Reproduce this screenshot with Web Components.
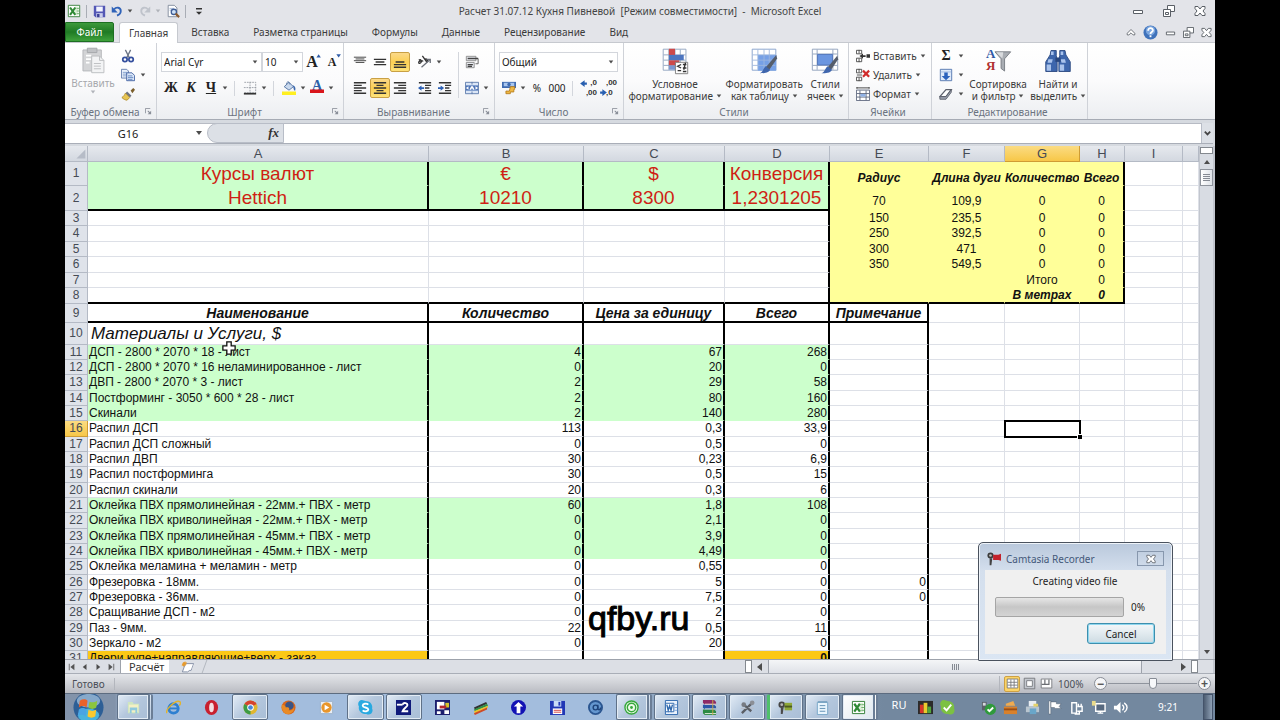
<!DOCTYPE html>
<html lang="ru">
<head>
<meta charset="utf-8">
<title>Расчет 31.07.12 Кухня Пивневой - Microsoft Excel</title>
<style>
  html, body {
    height: 100%;
    margin: 0;
    background: #000;
  }

  body {
    font: 10px/12px "Noto Sans", "Open Sans", sans-serif;
    color: #3b3b3b;
  }
</style>
</head>
<body>
<desk-top></desk-top>

<script>
const ICONS = {
  // title bar
  excel: [16, '<path fill="#fff" stroke="#2f7d33" d="M1.500 1.500h13v13h-13z"/><path fill="#dcefd8" d="M9 3h4v10H9z"/><path stroke="#2f8a35" stroke-width="2.400" fill="none" d="M3.500 4l6 8.500M9.500 4l-6 8.500"/><path stroke="#6cae6a" d="M11 5h3M11 8h3M11 11h3"/>'],
  save: [16, '<path fill="#5357b5" d="M1 1h14v14H3l-2-2z"/><path fill="#f2f4ff" d="M4 2h8v6H4z"/><path fill="#c9cdec" d="M4 10h8v5H4z"/><path fill="#3b3f94" d="M5 11h3v4H5z"/>'],
  undo: [16, '<path fill="none" stroke="#2f62b8" stroke-width="2.500" d="M4 6c3-4 9-3 9 2 0 3-2 5-5 6"/><path fill="#2f62b8" d="M1 2v8h8z"/>'],
  redo: [16, '<path fill="none" stroke="#bfc3cb" stroke-width="2.500" d="M12 6C9 2 3 3 3 8c0 3 2 5 5 6"/><path fill="#bfc3cb" d="M15 2v8H7z"/>'],
  preview: [16, '<path fill="#fff" stroke="#7d8798" d="M2.500 1.500h7l3 3v10h-10z"/><path stroke="#9fb4d4" d="M4 5h5M4 7h4"/><circle cx="9" cy="9" r="3" fill="#cfe2f8" stroke="#3f5e96" stroke-width="1.500"/><path stroke="#8a5b31" stroke-width="2.500" d="M11 11l4 4"/>'],
  custom: [16, '<path stroke="#333" stroke-width="2" d="M4 5h8"/><path fill="#333" d="M4 9h8l-4 4z"/>'],
  down: [8, '<path fill="#4c4c4c" d="M1 2h6L4 6z"/>'],
  downLight: [8, '<path fill="#b0b3b9" d="M1 2h6L4 6z"/>'],
  up: [8, '<path fill="#4c4c4c" d="M1 6h6L4 2z"/>'],
  left: [8, '<path fill="#4c4c4c" d="M6 0v8L1 4z"/>'],
  right: [8, '<path fill="#4c4c4c" d="M2 0v8l5-4z"/>'],
  first: [10, '<path fill="#555" d="M1 1h1v8H1zM8 1v8L3 5z"/>'],
  last: [10, '<path fill="#555" d="M8 1h1v8H8zM2 1v8l5-4z"/>'],
  min: [12, '<path fill="#fff" stroke="#5a5f66" d="M1.500 5.500h9v3h-9z"/>'],
  restore: [12, '<path fill="#fff" stroke="#5a5f66" d="M4.500 .5h7v6h-7z"/><path fill="#fff" stroke="#5a5f66" d="M.5 4.500h7v7h-7z"/><path fill="none" stroke="#5a5f66" d="M2.500 7.500h3v2h-3z"/>'],
  close: [12, '<path fill="#fff" stroke="#5a5f66" d="M1 1.500h3l2 2.500 2-2.500h3v2L9 6l2 2.500v2H8L6 8l-2 2.500H1v-2L3 6 1 3.500z"/>'],
  collapse: [12, '<path fill="#fff" stroke="#5a5f66" d="M1.500 7.500L6 3l4.500 4.500v2h-2L6 7 3.500 9.500h-2z"/>'],
  help: [16, '<circle cx="8" cy="8" r="7.500" fill="#3f72bb"/><circle cx="8" cy="6" r="5" fill="#7aa5de"/><path fill="none" stroke="#fff" stroke-width="2" d="M5.500 6c0-4 5.500-3 5 0-.3 1.500-2.500 1.500-2.500 3.500"/><path fill="#fff" d="M7 11h2v2H7z"/>'],
  chevron: [10, '<path fill="none" stroke="#444" stroke-width="2" d="M2 3l3 3 3-3"/>'],
  // ribbon
  paste: [32, '<path fill="#d3d4d6" stroke="#b2b4b7" d="M4.500 4.500h21v24h-21z"/><path fill="#c0c2c5" stroke="#a4a6a9" d="M9.500 2.500h11v5h-11z"/><path stroke="#fff" stroke-width="2" d="M8 11h6M8 15h6M8 19h4"/><path fill="#f3f4f5" stroke="#b8babd" d="M14.500 11.500h9l5 5v14h-14z"/><path fill="none" stroke="#b8babd" d="M23.500 11.500v5h5M17 20h8M17 23h8M17 26h8"/>'],
  cut: [16, '<path fill="none" stroke="#6c7586" stroke-width="1.500" d="M5 1l5 10M11 1L6 11"/><circle cx="4.500" cy="12" r="2.500" fill="none" stroke="#344f9e" stroke-width="2"/><circle cx="11.500" cy="12" r="2.500" fill="none" stroke="#344f9e" stroke-width="2"/>'],
  copy: [16, '<path fill="#e9f0fb" stroke="#5b76a8" d="M.5 1.500h6l2 2v8h-8z"/><path stroke="#7f9dcc" d="M2 5h5M2 7h5M2 9h4"/><path fill="#dce8fa" stroke="#3c5c9e" d="M6.500 5.500h6l3 3v6h-9z"/><path stroke="#5f82bd" d="M8 9h5M8 11h6M8 13h5"/>'],
  brush: [16, '<path fill="#7b5f2c" d="M11 4l3-3 2 2-3 4z"/><path fill="#6d7382" d="M7 5l5 5-2 2-5-5z"/><path fill="#e7c552" stroke="#b18d2d" d="M5 7l5 5-3 3c-2 0-4-1-6-3 2-1 3-3 4-5z"/>'],
  growFont: [16, '<path fill="#2f5ca8" d="M11 4l2-3 2 3z"/>'],
  shrinkFont: [16, '<path fill="#2f5ca8" d="M11 1h4l-2 3z"/>'],
  borders: [16, '<path fill="none" stroke="#979ba3" stroke-dasharray="2 1" d="M1.500 1.500h13v12h-13M8 1v13M1 7.500h14"/><path stroke="#333" stroke-width="2" d="M1 14.500h14"/>'],
  fill: [16, '<path fill="#c9d9ee" stroke="#51709f" d="M2.500 6.500L8 1.500l5 5-5 4z"/><path fill="none" stroke="#51709f" d="M5 4c0-4 4-4 4 0"/><path fill="#3d69ad" d="M12 5c3 0 4 3 3 6-1 0-2-2-2-4z"/><path fill="#ffef20" d="M0 12h16v4H0z"/>'],
  fontColor: [16, '<path fill="#d9151b" d="M0 12h16v4H0z"/>'],
  alignTop: [16, '<path stroke="#333" d="M1 2.500h14M3 4.500h10M1 6.500h14M3 8.500h10"/>'],
  alignMid: [16, '<path stroke="#333" stroke-width="1.500" d="M1 5h14M3 8h10M1 11h14"/>'],
  alignBot: [16, '<path stroke="#333" stroke-width="1.500" d="M3 8h10M1 11h14M1 14h14"/>'],
  alignLeft: [16, '<path stroke="#333" stroke-width="1.500" d="M1 2h14M1 5h9M1 8h14M1 11h9M1 14h14"/>'],
  alignCenter: [16, '<path stroke="#333" stroke-width="1.500" d="M1 2h14M4 5h8M1 8h14M4 11h8M1 14h14"/>'],
  alignRight: [16, '<path stroke="#333" stroke-width="1.500" d="M1 2h14M6 5h9M1 8h14M6 11h9M1 14h14"/>'],
  orient: [16, '<path fill="none" stroke="#333" stroke-width="1.500" d="M1 6c2-2 4 1 2 3s-3-1-1-2 3 0 4 0M5 1l5 7c2-2-1-5-2-3"/><path fill="none" stroke="#6b6f78" stroke-width="1.500" d="M4 14L13 6M10 5h4v4"/>'],
  outdent: [16, '<path stroke="#333" stroke-width="1.500" d="M1 2h14M8 5h7M8 8h5M8 11h7M1 14h14"/><path fill="#2b5fb4" d="M0 8l4-3v2h3v2H4v2z"/>'],
  indent: [16, '<path stroke="#333" stroke-width="1.500" d="M1 2h14M8 5h7M8 8h5M8 11h7M1 14h14"/><path fill="#2b5fb4" d="M7 8L3 5v2H0v2h3v2z"/>'],
  wrap: [16, '<path fill="#e8ebf0" stroke="#888" d="M1.500 1.500h11v5h-11zM1.500 8.500h9v6h-9z"/><path stroke="#444" stroke-width="1.500" d="M3 4h12M3 11h6M3 13h5"/><path fill="none" stroke="#555" d="M15 4v6h-3"/>'],
  merge: [16, '<path fill="#dbe6f6" stroke="#5776a8" d="M.5 1.500h15v13H.5z"/><path fill="#4f75b7" d="M1 5h14v6H1z"/><path stroke="#5776a8" d="M8 1v3M8 12v3"/><path fill="#fff" d="M1 8l3-2v4zM15 8l-3-2v4zM7 6h2l2 4H9L8 8l-1 2H5z"/>'],
  money: [16, '<path fill="#3f6bb1" d="M0 1h16v7H0z"/><path fill="#a9c6ee" d="M2 2h12v4H2z"/><circle cx="8" cy="4" r="2" fill="#3f6bb1"/><path fill="#f0b944" stroke="#b67d1e" d="M9.500 6.500h5v3h-1v3h-4v2h-5v-3h4z"/>'],
  decArrowL: [16, '<path fill="#285fb0" d="M1 4l4-3v2h2v2H5v2z"/>'],
  decArrowR: [16, '<path fill="#285fb0" d="M7 12L3 9v2H1v2h2v2z"/>'],
  condFormat: [32, '<path fill="#fff" stroke="#8ba0bd" d="M2.500 2.500h26v24h-26zM9 3v23M16 3v23M22 3v23M3 9h25M3 15h25M3 21h25"/><path fill="#cd4a4a" d="M9 2h7v7H9zM9 15h12v6H9z"/><path fill="#4d76c0" d="M9 9h17v6H9z"/><path fill="#7b98d1" d="M9 21h7v5H9z"/><path fill="#fff" stroke="#777" d="M16.500 17.500h14v13h-14z"/><path fill="none" stroke="#333" stroke-width="1.500" d="M23 20l-4 2 4 2M19 27h4M25 20h4M29 24h-4M25 28h4M28 18l-2 8"/>'],
  tableFormat: [32, '<path fill="#fff" stroke="#7f9cc9" d="M2.500 2.500h27v24h-27z"/><path fill="#76a0e6" d="M9 9h21v18H9z"/><path fill="none" stroke="#9db6dd" d="M9 3v23M16 3v23M22 3v23M3 9h26M3 15h26M3 21h26"/><path fill="#555d6b" d="M30 9l1 4-9 13-4-3z"/><path fill="#3f66ad" d="M18 22l5 4c-2 4-7 4-12 4 4-1 4-6 7-8z"/>'],
  cellStyles: [32, '<path fill="#fff" stroke="#8a9cb8" d="M1.500 2.500h29v24h-29zM7 3v23M25 3v23M2 8h28M2 21h28"/><path fill="#6b96e0" stroke="#4a70b8" d="M7.500 8.500h17v12h-17z"/><path fill="#555d6b" d="M30 10l1 4-8 12-4-3z"/><path fill="#3f66ad" d="M19 22l5 4c-2 4-7 4-12 4 4-1 4-6 7-8z"/>'],
  cellInsert: [16, '<path fill="#fff" stroke="#444" d="M.5 1.500h6v4h-6zM.5 10.500h6v4h-6zM3.500 1v4M3.500 11v4"/><path fill="#333" d="M4 8l4-3v2h3v2H8v2zM12 6h4v4h-4z"/>'],
  cellDelete: [16, '<path fill="#fff" stroke="#444" d="M.5 1.500h6v4h-6zM.5 10.500h6v4h-6zM3.500 1v4M3.500 11v4M1 8h6"/><path stroke="#d02c2c" stroke-width="2.500" d="M8 3l7 7M15 3l-7 7"/>'],
  cellFormat: [16, '<path fill="#fff" stroke="#555f77" d="M.5 3.500h15v12H.5zM4.500 4v11M11.500 4v11M1 7.500h14M1 11.500h14"/><path fill="#8fb1e6" d="M5 8h6v3H5z"/><path stroke="#333" d="M1 1h14M1 0v2M15 0v2"/>'],
  fillDown: [16, '<path fill="#dfeafa" stroke="#4d70ab" d="M1.500 1.500h13v13h-13z"/><path stroke="#9bb6df" d="M2 4.500h12"/><path fill="#2b62bd" d="M6 5h4v4h3l-5 5-5-5h3z"/>'],
  eraser: [16, '<path fill="#fff" stroke="#5c606b" stroke-width="1.500" d="M1 11l7-8h6l-6 8z"/><path fill="#9aa0ad" stroke="#5c606b" d="M1 11h7l6-8v3l-6 8H1z"/>'],
  funnel: [32, '<path fill="#a9adb3" stroke="#74787f" d="M12.500 5.500h18l-7 8v14l-4-3V13.500z"/><path fill="#d9dbde" d="M14 6h8l-1 7z"/>'],
  find: [32, '<path fill="#3d66ac" stroke="#28477f" d="M8 4h6v6l1 4v14H2V17L7 9zM24 4h-6v6l-1 4v14h13V17L25 9z"/><path fill="#a9c3ec" d="M8 5h3v4H8zM19 5h3v4h-3zM5 14h5l-1 4H4zM19 14h5l1 4h-5zM3 20h5v7H3zM18 20h5v7h-5z"/><path fill="#28477f" d="M13 12h6v5h-6z"/>'],
  launcher: [8, '<path fill="none" stroke="#8a8f99" d="M.5 6V.5H6"/><path fill="#8a8f99" d="M7 3v4H3zM3 3h1l2 2-1 1-2-2z"/>'],
  // sheet
  corner: [16, '<path fill="#b6bcc7" d="M14 3v11H3z"/>'],
  newSheet: [16, '<path fill="#fff" stroke="#73809a" d="M4.500 3.500h11v9h-2l-2 2h-7z"/><path fill="#e79a2c" d="M3 0l1 2 2-1-1 2 2 1-2 1 1 2-2-1-1 2-1-2-2 1 1-2-2-1 2-1L0 1l2 1z"/>'],
  cross: [16, '<path fill="#fff" stroke="#111" stroke-width="1.500" d="M5.500 1h5v4.500H15v5h-4.500V15h-5v-4.500H1v-5h4.500z"/>'],
  viewNormal: [16, '<path fill="#fff" stroke="#6c6f74" d="M1.500 2.500h13v11h-13zM6 3v10M10 3v10M2 6.500h12M2 10h12"/>'],
  viewLayout: [16, '<path fill="#c4c8cf" stroke="#6c6f74" d="M1.500 1.500h13v13h-13z"/><path fill="#fff" stroke="#6c6f74" d="M4.500 4.500h7v7h-7z"/>'],
  viewBreak: [16, '<path fill="#fff" stroke="#6c6f74" d="M1.500 2.500h13v11h-13z"/><path fill="none" stroke="#6c6f74" stroke-width="1.500" d="M6 3v6h5V3M2 9h4"/>'],
  // dialog
  recorder: [16, '<circle cx="4" cy="4" r="3.500" fill="#3b3b3b"/><circle cx="4" cy="4" r="1.500" fill="#bbb"/><path fill="#444" d="M3 7h3l-1 8H3z"/><path fill="#c3222b" d="M7 3h6l3-1v8l-3-1H7z"/>'],
  // task bar
  start: [32, '<circle cx="16" cy="16" r="15.500" fill="#2d5f96"/><ellipse cx="16" cy="24" rx="11" ry="7" fill="#49b3dc"/><ellipse cx="16" cy="9" rx="12" ry="7" fill="#86a9cb"/><path fill="#e9622a" d="M7 9c3-2 6-2 8 0l-1 7c-3-2-5-2-8 0z"/><path fill="#8cc63e" d="M17 10c3 1 5 1 8-1l-1 7c-3 2-5 2-8 0z"/><path fill="#4aa4e3" d="M6 18c3-2 5-2 8 0l-1 7c-3-2-5-2-8 0z"/><path fill="#fbc92e" d="M16 18c3 2 5 2 8 0l-1 7c-3 2-5 2-8 0z"/>'],
  folder: [16, '<path fill="#cfe6c0" d="M2 2h5l1 2h6v10H2z"/><path fill="#f4f0c4" d="M3 5h10v8H3z"/><path fill="#8fc9dd" d="M4 8h8v6h-2v-3H6v3H4z"/>'],
  ie: [16, '<circle cx="8" cy="9" r="5" fill="none" stroke="#2d7fd0" stroke-width="3"/><path fill="#2d7fd0" d="M4 8h9v2H4z"/><path fill="none" stroke="#e3b32b" stroke-width="1.500" d="M1 14C-1 10 11-1 15 2c1 1 0 3-1 4"/>'],
  opera: [16, '<ellipse cx="8" cy="8" rx="7" ry="8" fill="#c8202f"/><ellipse cx="8" cy="8" rx="2.500" ry="5" fill="#f3dfe2"/>'],
  chrome: [16, '<circle cx="8" cy="8" r="7.500" fill="#e0b62f"/><path fill="#d5432f" d="M8 8L1.500 4.300a7.500 7.500 0 0 1 13 0z"/><path fill="#3c9b45" d="M8 8v7.500A7.500 7.500 0 0 1 1.500 4.300z"/><circle cx="8" cy="8" r="3.500" fill="#fff"/><circle cx="8" cy="8" r="2.500" fill="#4787d8"/>'],
  firefox: [16, '<circle cx="8" cy="8" r="7.500" fill="#d9661c"/><circle cx="9" cy="6" r="4.500" fill="#3b5484"/><path fill="#e98b26" d="M1 5c2 0 4 1 4 3 3-1 5 1 3 3 3 1 5-1 6-3 0 5-4 7-7 7S0 11 1 5z"/>'],
  player: [16, '<path fill="#e8eef6" stroke="#9fb2c9" d="M1.500 1.500h13v13h-13z"/><circle cx="8" cy="8" r="5.500" fill="#e8952a"/><path fill="#fff" d="M6 5v6l5-3z"/>'],
  skype: [16, '<path fill="#29a9e0" d="M4 0c2 0 3 1 4 1 5 0 8 4 7 8 2 4-2 8-6 6-5 0-9-3-8-8C-1 4 1 0 4 0z"/><path fill="none" stroke="#fff" stroke-width="2" d="M11 5c-2-2-6-1-6 1s6 2 6 4-4 3-6 1"/>'],
  two: [16, '<path fill="#101a7a" d="M0 0h16v16H0z"/><path fill="#fff" d="M1 4h6v2H1z"/><path fill="none" stroke="#fff" stroke-width="2" d="M7 5c1-3 6-2 5 1-1 2-4 3-5 6h6"/>'],
  paper: [16, '<path fill="#1b1e6e" d="M0 0h16v16H0z"/><path fill="#fff" d="M2 2h8v8H2z"/><path fill="#d4c32c" d="M11 3h4v5h-4z"/><path fill="#b5262c" d="M5 6h7v3H5z"/><path fill="#fff" d="M2 12h4v3H2zM10 11h5v4h-5z"/>'],
  stripes: [16, '<path fill="#333" d="M1 8l13-6 1 2L2 10z"/><path fill="#2f9144" d="M1 10l14-6 1 2L2 12z"/><path fill="#ecc32a" d="M1 12l15-6v2L2 14z"/><path fill="#d04a24" d="M1 14l14-6v2L2 16z"/>'],
  upload: [16, '<circle cx="8" cy="8" r="8" fill="#1212b4"/><path fill="#fff" d="M8 2l5 5h-3v7H6V7H3z"/>'],
  floppy: [16, '<path fill="#2137b5" d="M0 1h16v15H0z"/><path fill="#c9dcf7" d="M4 1h8v6H4z"/><path fill="#fff" d="M3 9h10v6H3z"/><path stroke="#d14141" d="M4 11h8M4 13h8"/><path fill="#2137b5" d="M9 2h2v4H9z"/>'],
  mail: [16, '<circle cx="8" cy="8" r="7" fill="#6597cf" stroke="#2a5590" stroke-width="2"/><circle cx="8" cy="8" r="2.500" fill="none" stroke="#1e437a" stroke-width="1.500"/><path fill="none" stroke="#1e437a" stroke-width="1.500" d="M10.500 5v4c0 2 3 2 3-1"/>'],
  spiral: [16, '<circle cx="8" cy="8" r="7" fill="#eefbe9" stroke="#37a83c" stroke-width="1.500"/><circle cx="8" cy="8" r="4.500" fill="none" stroke="#37a83c" stroke-width="1.500"/><circle cx="8" cy="8" r="1.500" fill="#37a83c"/>'],
  word: [16, '<path fill="#eaf2fc" stroke="#2e68ad" d="M1.500 .5h13v15h-13z"/><path fill="#fff" stroke="#2e68ad" d="M1.500 3.500h9v9h-9z"/><path fill="none" stroke="#2e68ad" stroke-width="1.500" d="M3 5l1.500 6L6 6.500 7.500 11 9 5"/><path stroke="#7fa5d6" d="M11 5h3M11 8h3M11 11h3"/>'],
  winrar: [16, '<path fill="#8d2a66" d="M1 0h12l2 2v3H3L1 3z"/><path fill="#2b57a8" d="M1 5h12l2 2v3H3L1 8z"/><path fill="#2c8a43" d="M1 10h12l2 2v4H3l-2-2z"/><path stroke="#f0efe6" d="M3 4.500h12M3 9.500h12M3 14.500h12"/><path fill="#c8a64b" d="M11 0h1v16h-1z"/>'],
  tools: [16, '<path stroke="#5b5f66" stroke-width="2.500" d="M2 14L13 3M4 5l8 7"/><circle cx="13" cy="3" r="2.500" fill="#8b8f96"/><circle cx="4" cy="5" r="2.500" fill="#777b82"/><path stroke="#b9bdc4" d="M1 9h6M9 8l6 1"/>'],
  camera: [16, '<circle cx="4" cy="5" r="3.500" fill="#454545"/><circle cx="4" cy="5" r="1.500" fill="#b5b5b5"/><path fill="#4b4b4b" d="M3 8h3l-1 7H3z"/><path fill="#8fa838" d="M7 3h8v8H7z"/><path fill="#4c5a22" d="M7 6h8v2H7z"/>'],
  note: [16, '<path fill="#e9f5fd" stroke="#77a6c8" d="M2.500 2.500h11v13h-11z"/><path stroke="#5e8eb1" d="M3 2h10M5 6h6M5 9h6M5 12h6"/>'],
  bars: [16, '<path fill="#2b2b2b" d="M0 1h16v14H0z"/><path fill="#d8342a" d="M2 5h4v9H2z"/><path fill="#ebcb2e" d="M6 3h4v11H6z"/><path fill="#52a43a" d="M10 7h4v7h-4z"/>'],
  skypeOk: [16, '<path fill="#7cc142" d="M4 0c2 0 3 1 4 1 5 0 8 4 7 8 2 4-2 8-6 6-5 0-9-3-8-8C-1 4 1 0 4 0z"/><path fill="none" stroke="#fff" stroke-width="2" d="M4 8l3 3 5-6"/>'],
  usb: [16, '<path fill="#5b6068" d="M1 2h5v9H1z"/><path fill="#d5d8dc" d="M2 3h3v3H2z"/><circle cx="10" cy="10" r="6" fill="#2f9a3b"/><path fill="none" stroke="#fff" stroke-width="2" d="M7 10l2 2 4-4"/>'],
  box: [16, '<path fill="#d9812b" d="M1 7h14v8H1z"/><path fill="#f0ab4f" d="M3 4l8-3 2 5H3z"/><path fill="#9c4e14" d="M1 9h14v2H1z"/>'],
  printer: [16, '<path fill="#e9edf2" d="M4 1h8v6H4z"/><path fill="#b9c5cf" d="M1 7h14v6H1z"/><path fill="#69a6c9" d="M5 9h7v6H5z"/><path fill="#e5d36b" d="M9 4h5v3H9z"/>'],
  flag: [16, '<path fill="#fff" stroke="#4d5c6e" stroke-width=".5" d="M2 1h2v14H2zM4 2h6v2h5l-2 3 2 2H8V8H4z"/>'],
  plug: [16, '<path fill="none" stroke="#fff" stroke-width="1.500" d="M3 3h5v11H3zM9 7h5v5H9M10 4v3M13 4v3M11 12v3H6"/>'],
  net: [16, '<path fill="#57697f" stroke="#fff" stroke-width="1.500" d="M5 4h10v8H5z"/><path stroke="#fff" stroke-width="1.500" d="M7 14h6M10 12v2"/><path fill="#eadb8b" d="M1 1h4v5H1z"/>'],
  sound: [16, '<path fill="#fff" d="M1 6h3l4-4v12l-4-4H1z"/><path fill="none" stroke="#fff" stroke-width="1.500" d="M10 5c2 2 2 4 0 6M12 3c4 3 4 7 0 10"/>']
}

class UiIcon extends HTMLElement {
  constructor() {
    super()
    this._shadowRoot = this.attachShadow({ mode: 'open' })
  }

  connectedCallback() {
    this.render()
  }

  render() {
    const [box, shapes] = ICONS[this.getAttribute('name')]
    const size = this.getAttribute('size') || 14

    this._shadowRoot.innerHTML = `
      <style>
        :host {
          display: inline-flex;
          flex: none;
        }

        svg {
          display: block;
        }
      </style>
      <svg width="${size}" height="${size}" viewBox="0 0 ${box} ${box}" aria-hidden="true">${shapes}</svg>
    `
  }
}

customElements.define('ui-icon', UiIcon)

// reset shared by every component with controls in it
const base = `
  :host {
    box-sizing: border-box;
  }

  * {
    box-sizing: border-box;
    padding: 0;
    margin: 0;
  }

  button, input, select {
    font: inherit;
    color: inherit;
    background: none;
    border: 0;
    border-radius: 0;
    outline: 0;
  }

  button {
    display: inline-flex;
    align-items: center;
    justify-content: center;
  }
`

class TitleBar extends HTMLElement {
  constructor() {
    super()
    this._shadowRoot = this.attachShadow({ mode: 'open' })
  }

  connectedCallback() {
    this.render()
  }

  render() {
    this._shadowRoot.innerHTML = `
      <style>
        ${base}
        :host {
          display: grid;
          grid-template-columns: 1fr auto 1fr;
          align-items: center;
          height: 22px;
          background: #e3e4e9;
        }

        .quick {
          display: flex;
          align-items: center;
          height: 20px;
        }

        .quick button {
          width: 17px;
        }

        .quick .wide {
          width: 28px;
          gap: 4px;
        }

        i {
          width: 1px;
          height: 13px;
          margin: 0 4px;
          background: #a9adb5;
        }

        h1 {
          font-size: 10px;
          font-weight: 400;
          white-space: pre;
          color: #444;
        }

        .window {
          display: flex;
          justify-content: flex-end;
          gap: 19px;
          padding-right: 9px;
        }
      </style>
      <div class="quick">
        <button aria-label="Excel"><ui-icon name="excel" size="14"></ui-icon></button>
        <i></i>
        <button aria-label="Сохранить"><ui-icon name="save" size="13"></ui-icon></button>
        <button class="wide" aria-label="Отменить"><ui-icon name="undo" size="12"></ui-icon><ui-icon name="down" size="6"></ui-icon></button>
        <button class="wide" aria-label="Вернуть"><ui-icon name="redo" size="12"></ui-icon><ui-icon name="downLight" size="6"></ui-icon></button>
        <button aria-label="Просмотр"><ui-icon name="preview" size="14"></ui-icon></button>
        <i></i>
        <button aria-label="Настройка панели"><ui-icon name="custom" size="12"></ui-icon></button>
      </div>
      <h1>Расчет 31.07.12 Кухня Пивневой  [Режим совместимости]  -  Microsoft Excel</h1>
      <div class="window">
        <button aria-label="Свернуть"><ui-icon name="min" size="12"></ui-icon></button>
        <button aria-label="Восстановить"><ui-icon name="restore" size="12"></ui-icon></button>
        <button aria-label="Закрыть"><ui-icon name="close" size="12"></ui-icon></button>
      </div>
    `
  }
}

customElements.define('title-bar', TitleBar)

class RibbonTabs extends HTMLElement {
  constructor() {
    super()
    this._shadowRoot = this.attachShadow({ mode: 'open' })
  }

  connectedCallback() {
    this.render()
  }

  render() {
    const tabs = ['Главная', 'Вставка', 'Разметка страницы', 'Формулы', 'Данные', 'Рецензирование', 'Вид']

    this._shadowRoot.innerHTML = `
      <style>
        ${base}
        :host {
          display: flex;
          height: 21px;
          background: #e3e4e9;
          border-bottom: 1px solid #c6c9cf;
        }

        nav {
          display: flex;
          flex: 1;
        }

        button {
          height: 20px;
          padding: 0 12px;
        }

        .file {
          width: 49px;
          margin-right: 5px;
          color: #fff;
          background: linear-gradient(#3d9a3c, #1f7a24 50%, #3fa23c);
          border: 1px solid #1d6f22;
          border-radius: 0 2px 0 0;
        }

        .active {
          height: 21px;
          padding: 0 9px;
          background: #fff;
          border: 1px solid #c6c9cf;
          border-bottom: 0;
          border-radius: 3px 3px 0 0;
          margin-right: 1px;
        }

        .side {
          display: flex;
          align-items: center;
          gap: 7px;
          padding-right: 3px;
        }

        .side button {
          padding: 0;
        }
      </style>
      <nav>
        <button class="file">Файл</button>
        ${tabs.map((tab, i) => `<button class="${i ? '' : 'active'}">${tab}</button>`).join('')}
      </nav>
      <div class="side">
        <button aria-label="Свернуть ленту"><ui-icon name="collapse" size="10"></ui-icon></button>
        <button aria-label="Справка"><ui-icon name="help" size="15"></ui-icon></button>
        <button aria-label="Свернуть окно"><ui-icon name="min" size="11"></ui-icon></button>
        <button aria-label="Восстановить окно"><ui-icon name="restore" size="11"></ui-icon></button>
        <button aria-label="Закрыть окно"><ui-icon name="close" size="11"></ui-icon></button>
      </div>
    `
  }
}

customElements.define('ribbon-tabs', RibbonTabs)

class RibbonGroup extends HTMLElement {
  constructor() {
    super()
    this._shadowRoot = this.attachShadow({ mode: 'open' })
  }

  connectedCallback() {
    this.render()
  }

  render() {
    const launcher = this.hasAttribute('launcher')
      ? '<button aria-label="Параметры"><ui-icon name="launcher" size="7"></ui-icon></button>'
      : ''

    this._shadowRoot.innerHTML = `
      <style>
        ${base}
        :host {
          display: grid;
          grid-template-rows: 1fr 15px;
          border-right: 1px solid #cfd2d8;
        }

        footer {
          display: flex;
          align-items: center;
          padding-right: 4px;
          color: #6b7380;
        }

        span {
          flex: 1;
          text-align: center;
          white-space: nowrap;
        }
      </style>
      <slot></slot>
      <footer><span>${this.getAttribute('label')}</span>${launcher}</footer>
    `
  }
}

customElements.define('ribbon-group', RibbonGroup)

class DropBox extends HTMLElement {
  constructor() {
    super()
    this._shadowRoot = this.attachShadow({ mode: 'open' })
  }

  connectedCallback() {
    this.render()
  }

  render() {
    this._shadowRoot.innerHTML = `
      <style>
        ${base}
        :host {
          display: block;
        }

        label {
          display: grid;
          align-items: center;
          height: 20px;
          background: #fff;
          border: 1px solid #d3d6dc;
        }

        select, ui-icon {
          grid-area: 1 / 1;
        }

        select {
          width: 100%;
          height: 18px;
          padding: 0 2px;
          appearance: none;
          color: #222;
        }

        ui-icon {
          justify-self: end;
          margin-right: 3px;
          pointer-events: none;
        }
      </style>
      <label>
        <select aria-label="${this.getAttribute('label')}"><option>${this.getAttribute('value')}</option></select>
        <ui-icon name="down" size="6"></ui-icon>
      </label>
    `
  }
}

customElements.define('drop-box', DropBox)

class RibbonBar extends HTMLElement {
  constructor() {
    super()
    this._shadowRoot = this.attachShadow({ mode: 'open' })
  }

  connectedCallback() {
    this.render()
  }

  tool(icon, label, mark = '') {
    return `<button class="tool ${mark}" aria-label="${label}"><ui-icon name="${icon}"></ui-icon></button>`
  }

  arrow(label) {
    return `<button class="arrow" aria-label="${label}"><ui-icon name="down" size="6"></ui-icon></button>`
  }

  big(icon, first, second) {
    return `
      <button class="big">
        <ui-icon name="${icon}" size="28"></ui-icon>
        <span>${first}<br>${second} <ui-icon name="down" size="6"></ui-icon></span>
      </button>
    `
  }

  row(icon, text) {
    return `<button class="row"><ui-icon name="${icon}"></ui-icon>${text}<ui-icon name="down" size="6"></ui-icon></button>`
  }

  render() {
    this._shadowRoot.innerHTML = `
      <style>
        ${base}
        :host {
          display: flex;
          height: 77px;
          background: linear-gradient(#fff, #fbfbfc 50%, #eceef1);
          border-bottom: 1px solid #a6abb4;
        }

        .clipboard { width: 92px; }
        .font { width: 187px; }
        .align { width: 151px; }
        .number { width: 129px; }
        .styles { width: 225px; }
        .cells { width: 83px; }
        .edit { width: 156px; }

        .tool {
          width: 20px;
          height: 20px;
          color: #222;
        }

        .arrow {
          width: 8px;
          height: 20px;
        }

        .active {
          background: linear-gradient(#fbd98a, #fcd054 50%, #fde27a);
          border: 1px solid #c9a044;
          border-radius: 2px;
        }

        .lines {
          display: grid;
          grid-template-rows: 20px 20px;
          align-content: start;
          gap: 6px;
          padding: 9px 0 0 4px;
        }

        .lines > div {
          display: flex;
          align-items: center;
        }

        .sep {
          width: 1px;
          height: 15px;
          margin: 0 5px;
          background: #d3d6dc;
        }

        .letter {
          font: 700 14px/16px "Liberation Serif", serif;
        }

        .letter u {
          text-underline-offset: 1px;
        }

        .lettered {
          display: grid;
          font: 700 16px/16px "Liberation Serif", serif;
          place-items: center;
        }

        .lettered > * {
          grid-area: 1 / 1;
        }

        .lettered span {
          padding-right: 2px;
        }

        .small {
          font-size: 12px;
        }

        .blue {
          font-size: 14px;
          color: #2b5fa8;
          padding-bottom: 4px;
        }

        .blue span {
          padding: 0;
        }

        .clip {
          display: grid;
          grid-template-columns: 56px 1fr;
          padding-top: 3px;
        }

        .stack {
          display: grid;
          grid-template-rows: repeat(3, 19px);
          justify-items: start;
        }

        .stack button {
          height: 19px;
          gap: 5px;
        }

        .big {
          flex-direction: column;
          justify-content: start;
          line-height: 12px;
          white-space: nowrap;
          padding-top: 2px;
        }

        .big ui-icon {
          vertical-align: 1px;
        }

        .big .text, .big > ui-icon + span {
          padding-top: 3px;
        }

        .off {
          color: #a6a8ac;
          padding-top: 0;
        }

        .aligns {
          display: grid;
          grid-template: 20px 20px / repeat(3, 20px) 5px 20px 20px 7px 20px 8px;
          align-content: start;
          row-gap: 6px;
          padding: 9px 0 0 6px;
        }

        .aligns .c1 { grid-column: 1; }
        .aligns .c5 { grid-column: 5; }
        .aligns .c6 { grid-column: 6; }
        .aligns .c8 { grid-column: 8; }

        .aligns .bar {
          grid-area: 1 / 7 / 3;
          width: 1px;
          margin: 0 3px;
          background: #d3d6dc;
        }

        .bigs {
          display: flex;
          justify-content: center;
          gap: 4px;
          padding-top: 2px;
        }

        .row {
          white-space: nowrap;
        }

        .stack .row {
          gap: 3px;
        }

        .cellrows {
          padding: 3px 0 0 7px;
        }

        .editing {
          display: grid;
          grid-template-columns: 34px 64px 56px;
        }

        .editing > .big {
          padding-top: 4px;
        }

        .sort ui-icon, .sort b {
          grid-area: 1 / 1;
        }

        .sort .art {
          display: grid;
          width: 28px;
          height: 28px;
        }

        .sort b {
          font: 700 13px/12px "Liberation Serif", serif;
          color: #2f58a4;
          text-align: left;
          padding: 1px 0 0 2px;
        }

        .sort em {
          display: block;
          font-style: normal;
          color: #b03030;
        }

        .sigma {
          font: 700 14px/14px "Liberation Serif", serif;
          width: 14px;
          color: #222;
        }

        .digits {
          display: grid;
          font: 700 8px/10px "Liberation Sans", sans-serif;
          color: #333;
          text-align: right;
        }

        .digits ui-icon, .digits span {
          grid-area: 1 / 1;
        }

        .far span {
          padding-left: 7px;
          text-align: left;
        }
      </style>

      <ribbon-group class="clipboard" label="Буфер обмена" launcher>
        <div class="clip">
          <button class="big off"><ui-icon name="paste" size="28"></ui-icon><span>Вставить</span><ui-icon name="downLight" size="6"></ui-icon></button>
          <div class="stack">
            <button aria-label="Вырезать"><ui-icon name="cut"></ui-icon></button>
            <button aria-label="Копировать"><ui-icon name="copy"></ui-icon><ui-icon name="down" size="6"></ui-icon></button>
            <button aria-label="Формат по образцу"><ui-icon name="brush"></ui-icon></button>
          </div>
        </div>
      </ribbon-group>

      <ribbon-group class="font" label="Шрифт" launcher>
        <div class="lines">
          <div>
            <drop-box label="Шрифт" value="Arial Cyr" style="width: 101px"></drop-box>
            <drop-box label="Размер шрифта" value="10" style="width: 41px"></drop-box>
            <button class="tool lettered" aria-label="Увеличить размер"><span>A</span><ui-icon name="growFont" size="18"></ui-icon></button>
            <button class="tool lettered small" aria-label="Уменьшить размер"><span>A</span><ui-icon name="shrinkFont" size="18"></ui-icon></button>
          </div>
          <div>
            <button class="tool letter">Ж</button>
            <button class="tool letter"><em>К</em></button>
            <button class="tool letter"><u>Ч</u></button>
            ${this.arrow('Вид подчёркивания')}
            <i class="sep"></i>
            ${this.tool('borders', 'Границы')}
            ${this.arrow('Вид границ')}
            <i class="sep"></i>
            ${this.tool('fill', 'Заливка')}
            ${this.arrow('Цвет заливки')}
            <button class="tool lettered blue" aria-label="Цвет текста"><span>A</span><ui-icon name="fontColor"></ui-icon></button>
            ${this.arrow('Выбор цвета текста')}
          </div>
        </div>
      </ribbon-group>

      <ribbon-group class="align" label="Выравнивание" launcher>
        <div class="aligns">
          ${this.tool('alignTop', 'По верхнему краю')}
          ${this.tool('alignMid', 'Посередине')}
          ${this.tool('alignBot', 'По нижнему краю', 'active')}
          ${this.tool('orient', 'Ориентация', 'c5')}
          <button class="arrow c6" aria-label="Угол"><ui-icon name="down" size="6"></ui-icon></button>
          <i class="bar"></i>
          ${this.tool('wrap', 'Перенос текста', 'c8')}
          ${this.tool('alignLeft', 'По левому краю', 'c1')}
          ${this.tool('alignCenter', 'По центру', 'active')}
          ${this.tool('alignRight', 'По правому краю')}
          ${this.tool('outdent', 'Уменьшить отступ', 'c5')}
          ${this.tool('indent', 'Увеличить отступ')}
          ${this.tool('merge', 'Объединить', 'c8')}
          ${this.arrow('Вид объединения')}
        </div>
      </ribbon-group>

      <ribbon-group class="number" label="Число" launcher>
        <div class="lines">
          <drop-box label="Числовой формат" value="Общий" style="width: 119px"></drop-box>
          <div>
            ${this.tool('money', 'Денежный формат')}
            ${this.arrow('Валюта')}
            <button class="tool">%</button>
            <button class="tool">000</button>
            <i class="sep"></i>
            <button class="tool digits" aria-label="Увеличить разрядность"><ui-icon name="decArrowL" size="18"></ui-icon><span>,0<br>,00</span></button>
            <button class="tool digits far" aria-label="Уменьшить разрядность"><ui-icon name="decArrowR" size="18"></ui-icon><span>,00<br>,0</span></button>
          </div>
        </div>
      </ribbon-group>

      <ribbon-group class="styles" label="Стили">
        <div class="bigs">
          ${this.big('condFormat', 'Условное', 'форматирование')}
          ${this.big('tableFormat', 'Форматировать', 'как таблицу')}
          ${this.big('cellStyles', 'Стили', 'ячеек')}
        </div>
      </ribbon-group>

      <ribbon-group class="cells" label="Ячейки">
        <div class="stack cellrows">
          ${this.row('cellInsert', 'Вставить')}
          ${this.row('cellDelete', 'Удалить')}
          ${this.row('cellFormat', 'Формат')}
        </div>
      </ribbon-group>

      <ribbon-group class="edit" label="Редактирование">
        <div class="editing">
          <div class="stack cellrows">
            <button aria-label="Сумма"><span class="sigma">Σ</span><ui-icon name="down" size="6"></ui-icon></button>
            <button aria-label="Заполнить"><ui-icon name="fillDown"></ui-icon><ui-icon name="down" size="6"></ui-icon></button>
            <button aria-label="Очистить"><ui-icon name="eraser"></ui-icon><ui-icon name="down" size="6"></ui-icon></button>
          </div>
          <button class="big sort">
            <span class="art"><ui-icon name="funnel" size="28"></ui-icon><b>А<em>Я</em></b></span>
            <span class="text">Сортировка<br>и фильтр <ui-icon name="down" size="6"></ui-icon></span>
          </button>
          ${this.big('find', 'Найти и', 'выделить')}
        </div>
      </ribbon-group>
    `
  }
}

customElements.define('ribbon-bar', RibbonBar)

class FormulaBar extends HTMLElement {
  constructor() {
    super()
    this._shadowRoot = this.attachShadow({ mode: 'open' })
  }

  connectedCallback() {
    this.render()
  }

  render() {
    this._shadowRoot.innerHTML = `
      <style>
        ${base}
        :host {
          display: flex;
          height: 26px;
          background: #fff;
          border: solid #d6dae0;
          border-width: 3px 2px 2px 0;
          box-shadow: inset 0 -1px #a9aeb8, inset 0 1px #b7bbc4;
        }

        .name {
          width: 126px;
          height: 20px;
          text-align: center;
          font-size: 11px;
          color: #222;
        }

        .pick {
          width: 16px;
          height: 20px;
        }

        .tools {
          display: flex;
          justify-content: flex-end;
          align-items: center;
          width: 77px;
          height: 20px;
          padding-right: 4px;
          background: #dce0e6;
          border: 1px solid #b8bdc7;
          border-radius: 10px 0 0 10px;
        }

        .tools button {
          font: italic 700 13px/16px "Liberation Serif", serif;
          color: #333;
        }

        .text {
          flex: 1;
          min-width: 0;
          height: 20px;
          padding: 0 4px;
        }

        .expand {
          width: 12px;
          height: 20px;
          background: #dce0e6;
          border-left: 1px solid #b8bdc7;
        }
      </style>
      <input class="name" value="G16" aria-label="Имя ячейки">
      <button class="pick" aria-label="Список имён"><ui-icon name="down" size="8"></ui-icon></button>
      <div class="tools"><button aria-label="Вставить функцию">fx</button></div>
      <input class="text" aria-label="Строка формул">
      <button class="expand" aria-label="Развернуть строку формул"><ui-icon name="chevron" size="9"></ui-icon></button>
    `
  }
}

customElements.define('formula-bar', FormulaBar)

// name, quantity, price, total, note
const ITEMS = [
  ['ДСП - 2800 * 2070 * 18 - лист', '4', '67', '268', ''],
  ['ДСП - 2800 * 2070 * 16 неламинированное - лист', '0', '20', '0', ''],
  ['ДВП - 2800 * 2070 * 3 - лист', '2', '29', '58', ''],
  ['Постформинг - 3050 * 600 * 28 - лист', '2', '80', '160', ''],
  ['Скинали', '2', '140', '280', ''],
  ['Распил ДСП', '113', '0,3', '33,9', ''],
  ['Распил ДСП сложный', '0', '0,5', '0', ''],
  ['Распил ДВП', '30', '0,23', '6,9', ''],
  ['Распил постформинга', '30', '0,5', '15', ''],
  ['Распил скинали', '20', '0,3', '6', ''],
  ['Оклейка ПВХ прямолинейная - 22мм.+ ПВХ - метр', '60', '1,8', '108', ''],
  ['Оклейка ПВХ криволинейная - 22мм.+ ПВХ - метр', '0', '2,1', '0', ''],
  ['Оклейка ПВХ прямолинейная - 45мм.+ ПВХ - метр', '0', '3,9', '0', ''],
  ['Оклейка ПВХ криволинейная - 45мм.+ ПВХ - метр', '0', '4,49', '0', ''],
  ['Оклейка меламина + меламин - метр', '0', '0,55', '0', ''],
  ['Фрезеровка - 18мм.', '0', '5', '0', '0'],
  ['Фрезеровка - 36мм.', '0', '7,5', '0', '0'],
  ['Сращивание ДСП - м2', '0', '2', '0', ''],
  ['Паз - 9мм.', '22', '0,5', '11', ''],
  ['Зеркало - м2', '0', '20', '0', ''],
  ['Двери купе+направляющие+верх - заказ', '', '', '0', '']
]

const ARCS = [
  ['Радиус', 'Длина дуги', 'Количество', 'Всего'],
  ['70', '109,9', '0', '0'],
  ['150', '235,5', '0', '0'],
  ['250', '392,5', '0', '0'],
  ['300', '471', '0', '0'],
  ['350', '549,5', '0', '0'],
  ['', '', 'Итого', '0'],
  ['', '', 'В метрах', '0']
]

const RATES = [
  ['Курсы валют', '€', '$', 'Конверсия'],
  ['Hettich', '10210', '8300', '1,2301205']
]

class SheetGrid extends HTMLElement {
  constructor() {
    super()
    this._shadowRoot = this.attachShadow({ mode: 'open' })
  }

  connectedCallback() {
    this.render()
  }

  rowMarkup(number, kind, cells) {
    const tds = []
    for (let i = 0; i < 10; i++) {
      const active = number === 16 && i === 6 ? ' selected' : ''
      tds.push(`<td class="${'abcdefghij'[i]}${active}">${cells[i] || ''}</td>`)
    }
    return `<tr class="${kind}"><th scope="row" class="${number === 16 ? 'on' : ''}">${number}</th>${tds.join('')}</tr>`
  }

  rows() {
    const rows = []
    ARCS.forEach((arc, i) => {
      const kind = `top r${i + 1}` + (i < 2 ? ' rate' : '')
      rows.push(this.rowMarkup(i + 1, kind, [...(RATES[i] || ['', '', '', '']), ...arc]))
    })
    rows.push(this.rowMarkup(9, 'list head', ['Наименование', 'Количество', 'Цена за единицу', 'Всего', 'Примечание']))
    rows.push(this.rowMarkup(10, 'list section', ['Материалы и Услуги, $']))
    ITEMS.forEach((item, i) => {
      const green = i < 5 || (i > 9 && i < 14)
      const kind = 'list item' + (green ? ' green' : '') + (i === 20 ? ' order' : '') + (i % 3 === 2 ? ' tall' : '')
      rows.push(this.rowMarkup(i + 11, kind, item))
    })
    return rows.join('')
  }

  render() {
    this._shadowRoot.innerHTML = `
      <style>
        ${base}
        :host {
          display: grid;
          grid-template-columns: 1fr 16px;
          min-height: 0;
          background: #fff;
          overflow: hidden;
        }

        .view {
          min-width: 0;
          overflow: hidden;
        }

        table {
          width: 100%;
          table-layout: fixed;
          border-collapse: separate;
          border-spacing: 0;
          font: 12px/13px "Liberation Sans", Arial, sans-serif;
          color: #111;
        }

        th {
          font-weight: 400;
          color: #454b55;
          background: #dfe3ea;
          border: solid #b4bac5;
          border-width: 0 1px 1px 0;
        }

        thead tr {
          height: 16px;
        }

        thead th {
          font-size: 13px;
          background: linear-gradient(#e6e9ee, #d3d8e0);
        }

        thead ui-icon {
          display: flex;
          justify-content: flex-end;
        }

        th.on {
          background: linear-gradient(#fbdc83, #f7c748);
          border-color: #cf9c33;
        }

        tbody tr {
          height: 15px;
        }

        td {
          white-space: nowrap;
          overflow: hidden;
          border: solid #dde0e7;
          border-width: 0 1px 1px 0;
        }

        tbody .r1 { height: 24px; }
        tbody .r2 { height: 25px; }
        tbody .r4, tbody .r6, tbody .r8, tbody .tall { height: 16px; }

        .top td {
          text-align: center;
        }

        .rate td {
          vertical-align: bottom;
        }

        .rate .a, .rate .b, .rate .c, .rate .d {
          font-size: 19px;
          line-height: 22px;
          color: #cf1f14;
          background: #ccffcc;
          border-right: 2px solid #000;
          border-bottom: 1px solid #ccffcc;
        }

        .r2 .a, .r2 .b, .r2 .c, .r2 .d {
          border-bottom: 2px solid #000;
        }

        .top .d {
          border-right: 2px solid #000;
        }

        .top .e, .top .f, .top .g, .top .h {
          background: #ffff99;
          border-color: #ffff99;
        }

        .top .h {
          border-right: 2px solid #000;
        }

        .r1 .e, .r1 .f, .r1 .g, .r1 .h, .r8 .g, .r8 .h {
          font-weight: 700;
          font-style: italic;
        }

        .r2 .e, .r2 .f, .r2 .g, .r2 .h {
          line-height: 17px;
        }

        .r8 .a, .r8 .b, .r8 .c, .r8 .d, .r8 .e, .r8 .f, .r8 .g, .r8 .h {
          border-bottom: 2px solid #000;
        }

        .list .a, .list .b, .list .c, .list .d, .list .e {
          border-right: 2px solid #000;
        }

        tbody .head {
          height: 19px;
        }

        .head td {
          font-size: 14px;
          line-height: 16px;
          font-weight: 700;
          font-style: italic;
          text-align: center;
        }

        .head .a, .head .b, .head .c, .head .d, .head .e {
          border-bottom: 2px solid #000;
        }

        tbody .section {
          height: 22px;
        }

        .section td {
          font-size: 17px;
          line-height: 20px;
          font-style: italic;
          padding-left: 3px;
        }

        .item td {
          text-align: right;
          padding-right: 1px;
        }

        .item .a {
          text-align: left;
          padding-left: 1px;
        }

        .green .a, .green .b, .green .c, .green .d {
          background: #ccffcc;
          border-bottom-color: #ccffcc;
        }

        .order .a, .order .d {
          background: #fcc815;
        }

        .order .d {
          font-weight: 700;
        }

        td.selected {
          position: relative;
          overflow: visible;
          border-color: #000;
          box-shadow: inset 1px 1px #000, 0 0 0 1px #000;
        }

        .selected::after {
          content: "";
          position: absolute;
          right: -3px;
          bottom: -3px;
          width: 4px;
          height: 4px;
          background: #000;
          border: solid #fff;
          border-width: 1px 0 0 1px;
        }

        .scroll {
          display: flex;
          flex-direction: column;
          background: #d8dce3;
          border: solid #c2c6ce;
          border-width: 0 2px 0 1px;
        }

        .scroll button {
          flex: none;
          height: 14px;
        }

        .scroll .split {
          height: 7px;
          margin: 1px 0;
          background: #fff;
          border: 1px solid #84898f;
        }

        .scroll .thumb {
          height: 17px;
          background: linear-gradient(90deg, #fff, #dfe3e9);
          border: 1px solid #8f949d;
        }

        .thumb::before {
          content: "";
          width: 7px;
          height: 7px;
          background: repeating-linear-gradient(#858a93 0 1px, transparent 1px 2px);
        }

        .scroll span {
          flex: 1;
        }
      </style>
      <div class="view">
        <table>
          <colgroup>
            <col style="width: 23px">
            <col style="width: 341px">
            <col style="width: 155px">
            <col style="width: 141px">
            <col style="width: 105px">
            <col style="width: 99px">
            <col style="width: 76px">
            <col style="width: 75px">
            <col style="width: 45px">
            <col style="width: 58px">
            <col>
          </colgroup>
          <thead>
            <tr>
              <th aria-label="Выделить всё"><ui-icon name="corner" size="13"></ui-icon></th>
              ${[...'ABCDEFGHI'].map(name => `<th scope="col" class="${name === 'G' ? 'on' : ''}">${name}</th>`).join('')}
              <th></th>
            </tr>
          </thead>
          <tbody>${this.rows()}</tbody>
        </table>
      </div>
      <div class="scroll">
        <button class="split" aria-label="Разделить"></button>
        <button aria-label="Вверх"><ui-icon name="up" size="8"></ui-icon></button>
        <button class="thumb" aria-label="Прокрутка"></button>
        <span></span>
        <button aria-label="Вниз"><ui-icon name="down" size="8"></ui-icon></button>
      </div>
    `
  }
}

customElements.define('sheet-grid', SheetGrid)

class SheetTabs extends HTMLElement {
  constructor() {
    super()
    this._shadowRoot = this.attachShadow({ mode: 'open' })
  }

  connectedCallback() {
    this.render()
  }

  render() {
    this._shadowRoot.innerHTML = `
      <style>
        ${base}
        :host {
          display: flex;
          height: 15px;
          background: #dcdfe5;
          border-top: 1px solid #9da2ab;
          border-bottom: 1px solid #a9aeb7;
        }

        .nav {
          display: flex;
          width: 55px;
        }

        .nav button {
          width: 13px;
        }

        .tab {
          padding: 0 5px 0 8px;
          font-size: 11px;
          color: #333;
          background: #fff;
          border-left: 1px solid #9da2ab;
        }

        .new {
          width: 36px;
          border-right: 1px solid #b3b8c0;
          transform: skewX(-20deg);
        }

        .scroll {
          display: flex;
          width: 470px;
          margin-left: auto;
          border-right: 2px solid #c2c6ce;
        }

        .split {
          width: 7px;
          background: #fff;
          border: 1px solid #84898f;
        }

        .step {
          width: 16px;
        }

        .thumb {
          flex: 0 1 374px;
          background: linear-gradient(#f4f5f7, #dfe2e8);
          border: solid #9da2ab;
          border-width: 0 1px;
        }

        .thumb::before {
          content: "";
          width: 7px;
          height: 6px;
          background: repeating-linear-gradient(90deg, #858a93 0 1px, transparent 1px 2px);
        }

        .end {
          margin-left: auto;
        }

        .last {
          margin-right: 15px;
        }
      </style>
      <div class="nav">
        <button aria-label="Первый лист"><ui-icon name="first" size="8"></ui-icon></button>
        <button aria-label="Предыдущий лист"><ui-icon name="left" size="6"></ui-icon></button>
        <button aria-label="Следующий лист"><ui-icon name="right" size="6"></ui-icon></button>
        <button aria-label="Последний лист"><ui-icon name="last" size="8"></ui-icon></button>
      </div>
      <button class="tab">Расчёт</button>
      <button class="new" aria-label="Вставить лист"><ui-icon name="newSheet" size="12"></ui-icon></button>
      <div class="scroll">
        <button class="split" aria-label="Разделитель ярлыков"></button>
        <button class="step" aria-label="Влево"><ui-icon name="left" size="8"></ui-icon></button>
        <button class="thumb" aria-label="Прокрутка"></button>
        <button class="step end" aria-label="Вправо"><ui-icon name="right" size="8"></ui-icon></button>
        <button class="split last" aria-label="Разделить окно"></button>
      </div>
    `
  }
}

customElements.define('sheet-tabs', SheetTabs)

class StatusBar extends HTMLElement {
  constructor() {
    super()
    this._shadowRoot = this.attachShadow({ mode: 'open' })
  }

  connectedCallback() {
    this.render()
  }

  render() {
    this._shadowRoot.innerHTML = `
      <style>
        ${base}
        :host {
          display: flex;
          align-items: center;
          height: 19px;
          padding: 0 4px 0 7px;
          color: #4a4e56;
          background: linear-gradient(#e4e6ea, #cfd1d6 50%, #b9bbc2);
        }

        p {
          padding-right: 9px;
          border-right: 1px solid #b3b6bd;
        }

        .views {
          display: flex;
          gap: 1px;
          margin-left: auto;
          padding-left: 4px;
          border-left: 1px solid #b3b6bd;
        }

        .views button {
          width: 16px;
          height: 16px;
        }

        .views .active {
          background: #fcd467;
          border: 1px solid #cda145;
          border-radius: 2px;
        }

        output {
          width: 40px;
          padding-left: 4px;
        }

        .round {
          width: 13px;
          height: 13px;
          font: 700 12px/10px "Liberation Sans", sans-serif;
          color: #555;
          background: #f5f6f8;
          border: 1px solid #878c95;
          border-radius: 50%;
        }

        input {
          width: 89px;
          height: 13px;
          margin: 0 1px;
          appearance: none;
          background: linear-gradient(#8f949d, #8f949d) center / 100% 1px no-repeat;
        }

        input::-webkit-slider-thumb {
          appearance: none;
          width: 8px;
          height: 11px;
          background: #f7f8fa;
          border: 1px solid #868b94;
          border-radius: 1px 1px 4px 4px;
        }
      </style>
      <p>Готово</p>
      <div class="views">
        <button class="active" aria-label="Обычный"><ui-icon name="viewNormal" size="13"></ui-icon></button>
        <button aria-label="Разметка страницы"><ui-icon name="viewLayout" size="13"></ui-icon></button>
        <button aria-label="Страничный"><ui-icon name="viewBreak" size="13"></ui-icon></button>
      </div>
      <output>100%</output>
      <button class="round" aria-label="Уменьшить">−</button>
      <input type="range" min="0" max="100" value="50" aria-label="Масштаб">
      <button class="round" aria-label="Увеличить">+</button>
    `
  }
}

customElements.define('status-bar', StatusBar)

class TaskBar extends HTMLElement {
  constructor() {
    super()
    this._shadowRoot = this.attachShadow({ mode: 'open' })
  }

  connectedCallback() {
    this.render()
  }

  app([icon, label, state = '']) {
    return `<button class="${state}" aria-label="${label}"><ui-icon name="${icon}" size="15"></ui-icon></button>`
  }

  render() {
    const pinned = [
      ['folder', 'Проводник', 'open stacked'],
      ['ie', 'Internet Explorer'],
      ['opera', 'Opera'],
      ['chrome', 'Chrome', 'open'],
      ['firefox', 'Firefox'],
      ['player', 'Проигрыватель'],
      ['skype', 'Skype', 'open'],
      ['two', 'Калькулятор', 'open'],
      ['paper', 'Документы'],
      ['stripes', 'Раскрой'],
      ['upload', 'Загрузка'],
      ['floppy', 'Архив'],
      ['mail', 'Почта'],
      ['spiral', 'Связь', 'open stacked']
    ]
    const running = [
      ['word', 'Word', 'open'],
      ['winrar', 'WinRAR', 'open'],
      ['tools', 'Инструменты', 'open'],
      ['camera', 'Запись экрана', 'open busy'],
      ['note', 'Блокнот', 'open'],
      ['excel', 'Excel', 'open stacked current']
    ]
    const tray = ['usb', 'box', 'printer', 'flag', 'plug', 'net', 'sound']

    this._shadowRoot.innerHTML = `
      <style>
        ${base}
        :host {
          display: flex;
          align-items: center;
          height: 27px;
          background: linear-gradient(90deg, #8293aa 50px, #a3bddd 58px 550px, #8fa6c1 590px, #73889f 820px);
          border-top: 1px solid #5d6c80;
          overflow: hidden;
        }

        .start {
          width: 48px;
          padding-right: 2px;
        }

        .apps {
          display: grid;
          grid-auto-flow: column;
          grid-auto-columns: 1fr;
          height: 26px;
          margin-left: 4px;
          width: 537px;
        }

        .apps + .apps {
          width: 226px;
          margin-left: 0;
        }

        .apps button {
          margin-right: 2px;
          border: 1px solid transparent;
        }

        .apps .open {
          background: linear-gradient(135deg, #e3ecf6, #b4c7dd 50%, #a9bed6);
          border-color: #5f7188;
          border-radius: 2px;
          box-shadow: inset 0 0 0 1px #e3ecf5;
        }

        .apps .stacked {
          border-right: 5px double #6b7e96;
        }

        .apps .current {
          background: linear-gradient(135deg, #fff, #dfe8ee);
        }

        .apps .busy {
          border-left: 3px solid #4fc06b;
        }

        .lang {
          width: 38px;
          text-align: center;
          color: #fff;
          font-size: 11px;
          padding-bottom: 4px;
        }

        .tray {
          display: flex;
          gap: 7px;
          align-items: center;
        }

        .tray.wide {
          margin-left: auto;
        }

        time {
          width: 75px;
          padding-left: 5px;
          text-align: center;
          color: #fff;
        }

        .desk {
          width: 10px;
          height: 26px;
          margin-right: 2px;
          background: linear-gradient(90deg, #4d5d72, #8ea0b5);
          border: 1px solid #44536a;
        }
      </style>
      <button class="start" aria-label="Пуск"><ui-icon name="start" size="31"></ui-icon></button>
      <div class="apps">${pinned.map(this.app).join('')}</div>
      <div class="apps">${running.map(this.app).join('')}</div>
      <span class="lang">RU</span>
      <div class="tray">
        <ui-icon name="bars" size="15"></ui-icon>
        <ui-icon name="skypeOk" size="15"></ui-icon>
      </div>
      <div class="tray wide">
        ${tray.map(name => `<ui-icon name="${name}" size="15"></ui-icon>`).join('')}
      </div>
      <time>9:21</time>
      <button class="desk" aria-label="Свернуть все окна"></button>
    `
  }
}

customElements.define('task-bar', TaskBar)

class RecorderDialog extends HTMLElement {
  constructor() {
    super()
    this._shadowRoot = this.attachShadow({ mode: 'open' })
  }

  connectedCallback() {
    this.render()
  }

  render() {
    this._shadowRoot.innerHTML = `
      <style>
        ${base}
        :host {
          display: block;
          padding: 0 6px 6px;
          color: #1e1e1e;
          background: linear-gradient(#b9c8dc, #d4dfed 28px, #dbe6f3);
          border: 1px solid #4a525e;
          border-radius: 5px 5px 1px 1px;
          box-shadow: inset 0 0 0 1px #eef3f9;
        }

        header {
          display: flex;
          align-items: center;
          gap: 5px;
          height: 27px;
          padding: 4px 2px 0;
        }

        h2 {
          flex: 1;
          font-size: 10px;
          font-weight: 400;
          color: #44597a;
        }

        header button {
          width: 27px;
          height: 15px;
          border: 1px solid #8797ad;
        }

        section {
          display: grid;
          grid-template-columns: 129px 1fr;
          height: 84px;
          padding: 4px 11px 0 10px;
          align-content: start;
          background: #f0f0f0;
        }

        p {
          grid-column: 1 / 3;
          line-height: 14px;
          text-align: center;
        }

        .progress {
          height: 20px;
          margin: 9px 0 6px;
          background: linear-gradient(#e6e6e6, #c6c6c6 50%, #d4d4d4);
          border: 1px solid #a5a5a5;
          border-radius: 2px;
        }

        output {
          align-self: center;
          padding: 3px 0 0 7px;
        }

        .cancel {
          grid-column: 1 / 3;
          justify-self: end;
          width: 68px;
          height: 21px;
          background: linear-gradient(#f3f7f9, #e1eaef 50%, #cddbe2);
          border: 1px solid #3d8fae;
          border-radius: 3px;
          box-shadow: inset 0 0 0 1px #8fd6ee;
        }
      </style>
      <header>
        <ui-icon name="recorder" size="14"></ui-icon>
        <h2>Camtasia Recorder</h2>
        <button aria-label="Закрыть"><ui-icon name="close" size="10"></ui-icon></button>
      </header>
      <section>
        <p>Creating video file</p>
        <div class="progress" role="progressbar" aria-valuenow="0" aria-label="Creating video file"></div>
        <output>0%</output>
        <button class="cancel">Cancel</button>
      </section>
    `
  }
}

customElements.define('recorder-dialog', RecorderDialog)

class DeskTop extends HTMLElement {
  constructor() {
    super()
    this._shadowRoot = this.attachShadow({ mode: 'open' })
  }

  connectedCallback() {
    this.render()
  }

  render() {
    this._shadowRoot.innerHTML = `
      <style>
        :host {
          display: flex;
          flex-direction: column;
          position: relative;
          height: 100vh;
          margin: 0 65px;
          background: #e3e4e9;
          overflow: hidden;
        }

        title-bar, ribbon-tabs, ribbon-bar, formula-bar, sheet-tabs, status-bar, task-bar {
          flex: none;
        }

        sheet-grid {
          flex: 1;
        }

        recorder-dialog {
          position: absolute;
          right: 42px;
          bottom: 59px;
          width: 195px;
        }

        .site {
          position: absolute;
          left: 523px;
          top: 599px;
          margin: 0;
          font: 34px/38px "Liberation Sans", Arial, sans-serif;
          color: #000;
          -webkit-text-stroke: 1px #000;
        }

        .pointer {
          position: absolute;
          left: 157px;
          top: 341px;
        }
      </style>
      <title-bar></title-bar>
      <ribbon-tabs></ribbon-tabs>
      <ribbon-bar></ribbon-bar>
      <formula-bar></formula-bar>
      <sheet-grid></sheet-grid>
      <sheet-tabs></sheet-tabs>
      <status-bar></status-bar>
      <task-bar></task-bar>
      <recorder-dialog></recorder-dialog>
      <p class="site">qfby.ru</p>
      <ui-icon class="pointer" name="cross" size="14"></ui-icon>
    `
  }
}

customElements.define('desk-top', DeskTop)
</script>
</body>
</html>
